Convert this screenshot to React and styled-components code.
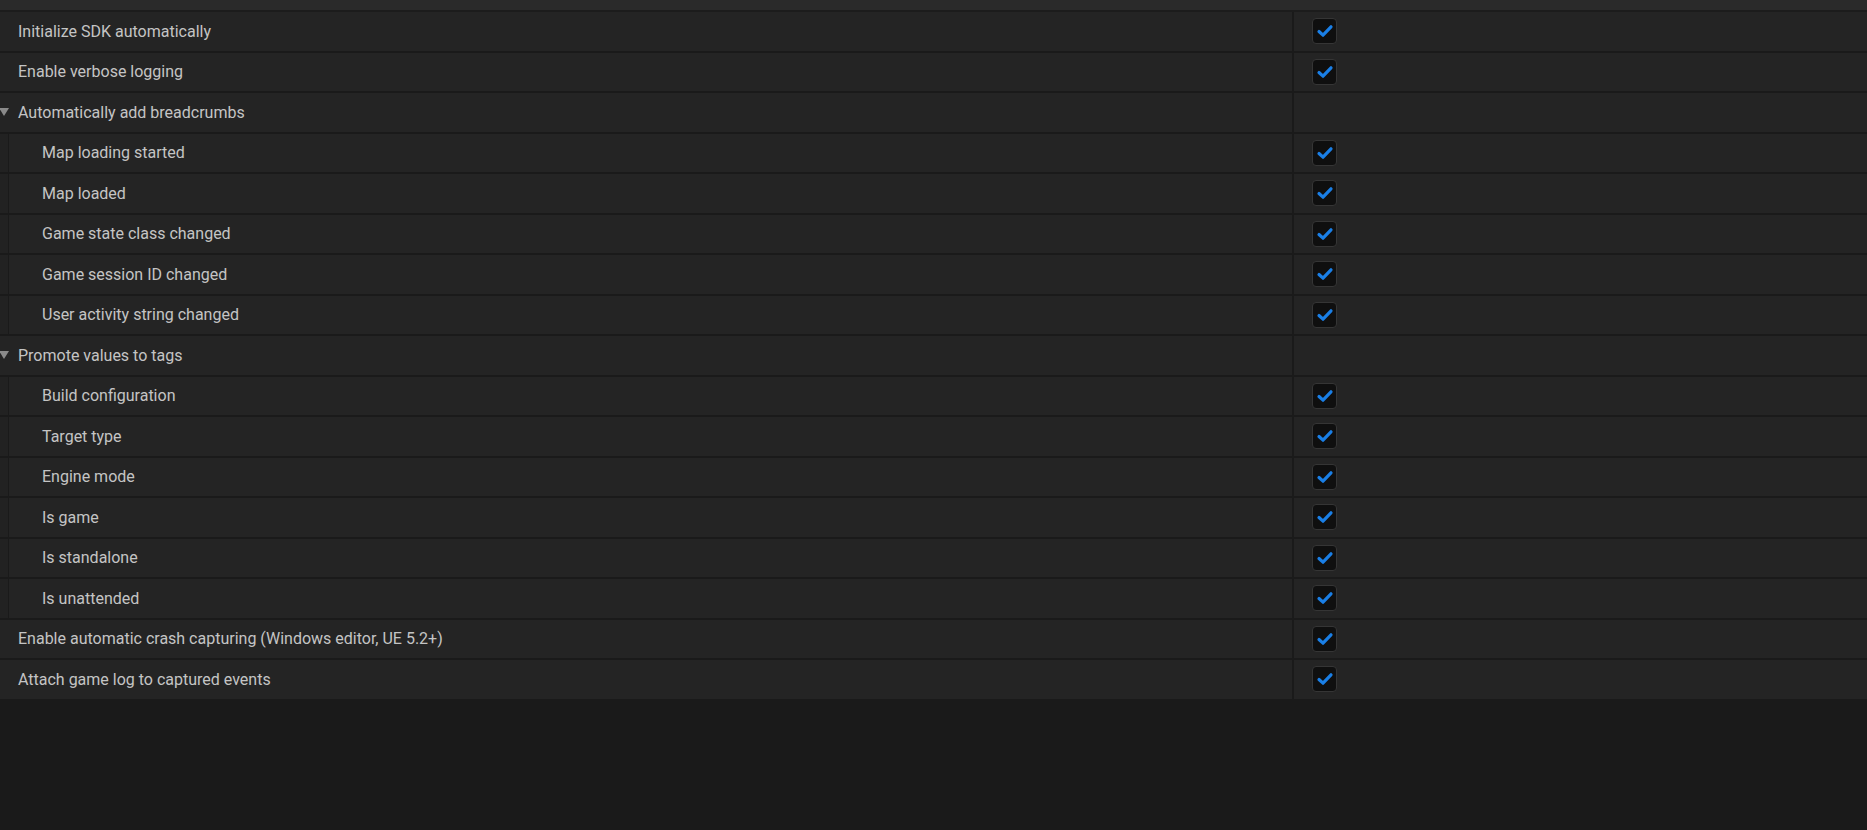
import React from 'react';
import styled, { createGlobalStyle } from 'styled-components';

const GlobalStyle = createGlobalStyle`
  html, body {
    margin: 0;
    padding: 0;
    background: #1a1a1a;
  }
  body {
    font-family: Roboto, "Liberation Sans", sans-serif;
  }
`;

const Page = styled.div`
  width: 1867px;
  height: 830px;
  background: #1a1a1a;
  overflow: hidden;
`;

const TopBar = styled.div`
  height: 10px;
  background: #2a2a2a;
  border-bottom: 2px solid #1c1c1c;
`;

const List = styled.div`
  display: flex;
  flex-direction: column;
  gap: 2px;
  background: #1a1a1a;
`;

const Row = styled.div`
  display: grid;
  grid-template-columns: 1292px 1fr;
  column-gap: 2px;
  height: 38.5px;
  background: #1a1a1a;
`;

const NameCell = styled.div`
  display: flex;
  align-items: stretch;
  background: #242424;
  position: relative;
`;

const IndentStrip = styled.div`
  width: 8px;
  flex: none;
  background: #222222;
  border-right: 1px solid #1a1a1a;
`;

const Label = styled.div`
  display: flex;
  align-items: center;
  padding-left: ${p => (p.$child ? 33 : 18)}px;
  color: #c4c4c4;
  font-size: 16px;
  white-space: nowrap;
`;

const Arrow = styled.span`
  position: absolute;
  left: -1px;
  top: 50%;
  margin-top: -4px;
  width: 0;
  height: 0;
  border-left: 5px solid transparent;
  border-right: 5px solid transparent;
  border-top: 8px solid #8a8a8a;
`;

const ValueCell = styled.div`
  display: flex;
  align-items: center;
  padding-left: 18px;
  background: #242424;
`;

const Box = styled.div`
  width: 23px;
  height: 24px;
  border: 1px solid #353535;
  border-radius: 4px;
  background: #0f0f0f;
  display: flex;
  align-items: center;
  justify-content: center;
`;

const Check = () => (
  <Box>
    <svg width="18" height="18" viewBox="0 0 18 18">
      <path
        d="M3 9.5 L7 13.2 L15 4.8"
        fill="none"
        stroke="#1a7fe6"
        strokeWidth="3.2"
        strokeLinecap="round"
        strokeLinejoin="round"
      />
    </svg>
  </Box>
);

const rows = [
  { label: 'Initialize SDK automatically', checked: true },
  { label: 'Enable verbose logging', checked: true },
  { label: 'Automatically add breadcrumbs', group: true },
  { label: 'Map loading started', child: true, checked: true },
  { label: 'Map loaded', child: true, checked: true },
  { label: 'Game state class changed', child: true, checked: true },
  { label: 'Game session ID changed', child: true, checked: true },
  { label: 'User activity string changed', child: true, checked: true },
  { label: 'Promote values to tags', group: true },
  { label: 'Build configuration', child: true, checked: true },
  { label: 'Target type', child: true, checked: true },
  { label: 'Engine mode', child: true, checked: true },
  { label: 'Is game', child: true, checked: true },
  { label: 'Is standalone', child: true, checked: true },
  { label: 'Is unattended', child: true, checked: true },
  { label: 'Enable automatic crash capturing (Windows editor, UE 5.2+)', checked: true },
  { label: 'Attach game log to captured events', checked: true },
];

export default function App() {
  return (
    <Page>
      <GlobalStyle />
      <TopBar />
      <List>
        {rows.map(r => (
          <Row key={r.label}>
            <NameCell>
              {r.group && <Arrow />}
              {r.child && <IndentStrip />}
              <Label $child={r.child}>{r.label}</Label>
            </NameCell>
            <ValueCell>{r.checked && <Check />}</ValueCell>
          </Row>
        ))}
      </List>
    </Page>
  );
}
